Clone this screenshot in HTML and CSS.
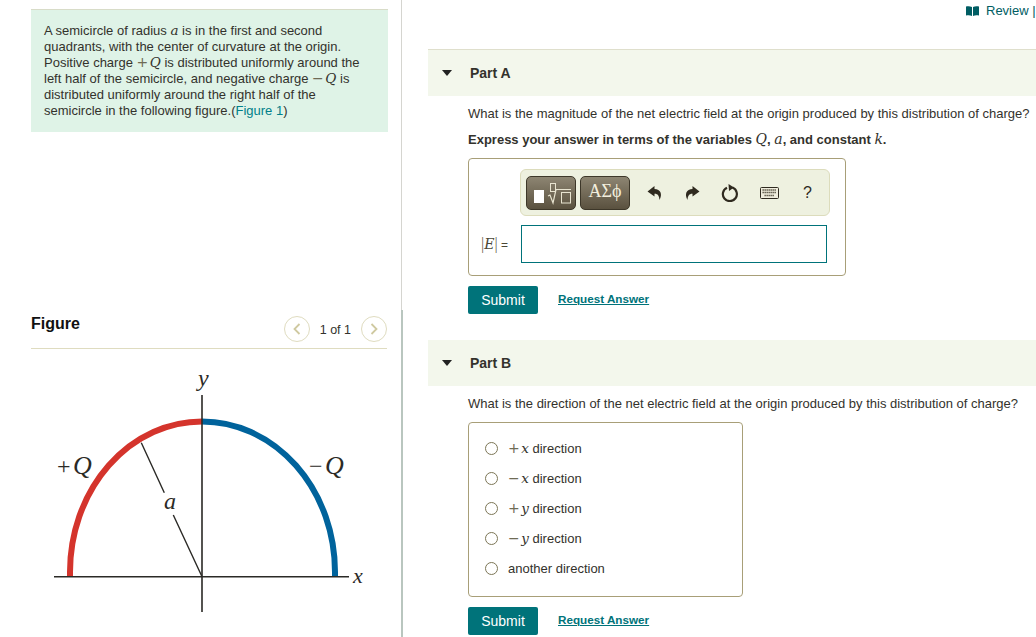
FILE: index.html
```html
<!DOCTYPE html>
<html lang="en">
<head>
  <meta charset="UTF-8">
  <meta name="viewport" content="width=device-width, initial-scale=1.0">
  <title>Part A and Part B</title>
  <link rel="stylesheet" href="styles.css">
</head>
<body>
  <div id="page">
    <!-- Left column: problem text and figure -->
    <div class="left-col">
      <div class="left-top">
        <div class="intro">
          A semicircle of radius <span class="math">a</span> is in the first and second quadrants, with the center of curvature at the origin. Positive charge <span class="math"><b>+</b>Q</span> is distributed uniformly around the left half of the semicircle, and negative charge <span class="math"><b>−</b>Q</span> is distributed uniformly around the right half of the semicircle in the following figure.(<a class="fig-link" href="#">Figure 1</a>)
        </div>
      </div>
      <div class="figure-pane">
        <div class="figure-head">
          <h2>Figure</h2>
          <div class="pager">
            <span class="page-btn">
              <svg width="10" height="12" viewBox="0 0 10 12"><path d="M7.5 1 L2.5 6 L7.5 11" fill="none" stroke="#cfc9a0" stroke-width="1.8"/></svg>
            </span>
            <span class="page-text">1 of 1</span>
            <span class="page-btn">
              <svg width="10" height="12" viewBox="0 0 10 12"><path d="M2.5 1 L7.5 6 L2.5 11" fill="none" stroke="#cfc9a0" stroke-width="1.8"/></svg>
            </span>
          </div>
        </div>
        <svg class="diagram" width="370" height="270" viewBox="0 349 370 270">
          <path d="M70 577 V572 A132 150.5 0 0 1 202 421.5" fill="none" stroke="#d4342c" stroke-width="6"/>
          <path d="M202 421.5 A133 150.5 0 0 1 335 572 V577" fill="none" stroke="#00639c" stroke-width="6"/>
          <path d="M54 576.7 H349 M202 395 V612" stroke="#2b2a26" stroke-width="1.6" fill="none"/>
          <path d="M141.3 442.7 L164.3 492.7 M173.3 515 L201.7 576" stroke="#2b2a26" stroke-width="1.4" fill="none"/>
          <text class="fig-label" x="198" y="386">y</text>
          <text class="fig-sym" x="57" y="474">+</text>
          <text class="fig-label fig-q" x="73" y="474">Q</text>
          <text class="fig-sym" x="309" y="474">−</text>
          <text class="fig-label fig-q" x="325" y="474">Q</text>
          <text class="fig-label" x="164" y="509">a</text>
          <text class="fig-label fig-x" x="353" y="583">x</text>
        </svg>
      </div>
    </div>

    <!-- Right column: the two parts -->
    <div class="right-col">
      <div class="top-links">
        <svg width="13" height="10" viewBox="0 0 13 10"><path d="M0 0.5 C2 0 4 0 6 1 V10 C4 9 2 9 0 9.5 Z M13 0.5 C11 0 9 0 7 1 V10 C9 9 11 9 13 9.5 Z" fill="#005d63"/></svg>
        <a href="#">Review | Constants</a>
      </div>

      <div class="part-head">
        <span class="caret"></span>
        <span class="part-title">Part A</span>
      </div>
      <div class="part-body">
        <p class="question">What is the magnitude of the net electric field at the origin produced by this distribution of charge?</p>
        <p class="hint">Express your answer in terms of the variables <span class="math">Q</span>, <span class="math">a</span>, and constant <span class="math">k</span>.</p>

        <div class="answer-box">
          <div class="toolbar">
            <button class="tool-btn" type="button">
              <svg width="44" height="28" viewBox="0 0 44 28">
                <rect x="5" y="11" width="10" height="13" fill="#fff"/>
                <rect x="21.5" y="4.5" width="5" height="8" fill="none" stroke="#e8e4d0" stroke-width="1"/>
                <path d="M19 17 L21 16 L24 24 L27 10.5 H42" fill="none" stroke="#e8e4d0" stroke-width="1.2"/>
                <rect x="32.5" y="13.5" width="9" height="10.5" fill="none" stroke="#e8e4d0" stroke-width="1"/>
              </svg>
            </button>
            <button class="tool-btn tool-text" type="button">ΑΣϕ</button>
            <div class="tool-icons">
              <svg width="16" height="16" viewBox="0 0 16 16"><path d="M7.5 1 L0.5 6.5 L7.5 11.5 V8.7 C10.5 8.5 12.3 10.5 12.5 15 C15.8 9 13.5 4 7.5 4 Z" fill="#2f2a1f"/></svg>
              <svg width="16" height="16" viewBox="0 0 16 16"><path d="M8.5 1 L15.5 6.5 L8.5 11.5 V8.7 C5.5 8.5 3.7 10.5 3.5 15 C0.2 9 2.5 4 8.5 4 Z" fill="#2f2a1f"/></svg>
              <svg width="18" height="18" viewBox="0 0 18 18"><path d="M6 3.7 A7 7 0 1 0 11.5 3.6" fill="none" stroke="#2f2a1f" stroke-width="2.2"/><path d="M7.5 0 L13 3.6 L8 7 Z" fill="#2f2a1f"/></svg>
              <svg width="19" height="12" viewBox="0 0 19 12"><rect x="0.5" y="0.5" width="18" height="11" rx="1" fill="#efeddd" stroke="#2f2a1f"/><path d="M2.5 3 H16.5 M2.5 5.5 H16.5 M4.5 8.5 H14.5" stroke="#4a4536" stroke-width="1.3" stroke-dasharray="1.3 0.7"/></svg>
              <span class="tool-help">?</span>
            </div>
          </div>
          <div class="input-row">
            <label class="input-label"><span class="math-bar">|</span><span class="math">E</span><span class="math-bar">|</span> =</label>
            <input class="answer-input" type="text">
          </div>
        </div>

        <div class="actions">
          <button class="submit-btn" type="button">Submit</button>
          <a class="request-link" href="#">Request Answer</a>
        </div>
      </div>

      <div class="part-head part-b">
        <span class="caret"></span>
        <span class="part-title">Part B</span>
      </div>
      <div class="part-body">
        <p class="question">What is the direction of the net electric field at the origin produced by this distribution of charge?</p>

        <div class="choice-box">
          <label class="choice"><span class="radio"></span><span><span class="math"><b>+</b>x</span> direction</span></label>
          <label class="choice"><span class="radio"></span><span><span class="math"><b>−</b>x</span> direction</span></label>
          <label class="choice"><span class="radio"></span><span><span class="math"><b>+</b>y</span> direction</span></label>
          <label class="choice"><span class="radio"></span><span><span class="math"><b>−</b>y</span> direction</span></label>
          <label class="choice"><span class="radio"></span><span>another direction</span></label>
        </div>

        <div class="actions">
          <button class="submit-btn" type="button">Submit</button>
          <a class="request-link" href="#">Request Answer</a>
        </div>
      </div>
    </div>
  </div>
</body>
</html>
```

FILE: styles.css
```css
/* Global */
html, body {
  margin: 0;
  padding: 0;
  height: 100%;
  overflow: hidden;
  background: #fff;
}
body {
  font-family: "Liberation Sans", Arial, sans-serif;
  font-size: 13px;
  color: #33322c;
}
#page {
  display: flex;
  height: 637px;
  width: 1036px;
  overflow: hidden;
}
a {
  color: #00737a;
  text-decoration: none;
}
.math {
  font-family: "DejaVu Serif", serif;
  font-style: italic;
  font-size: 13.5px;
  line-height: 1;
}
.math b {
  font-family: "DejaVu Sans", sans-serif;
  font-style: normal;
  font-weight: normal;
  font-size: 14px;
  color: #6f6b55;
  margin-right: 1.5px;
}

/* Left column */
.left-col {
  width: 403px;
  flex: none;
  display: flex;
  flex-direction: column;
}
.left-top {
  width: 402px;
  height: 310px;
  box-sizing: border-box;
  padding: 9px 13px 0 31px;
  border-right: 1px solid #d5d5d0;
}
.intro {
  background: #dff3e7;
  border-top: 1px solid #d8dcc8;
  padding: 13px 22px 13px 13px;
  line-height: 16px;
  height: 96px;
}
.fig-link {
  color: #00808a;
}
.figure-pane {
  flex: 1;
  padding: 0 14px 0 31px;
  border-right: 2px solid #b9c6bf;
}
.figure-head {
  display: flex;
  justify-content: space-between;
  align-items: center;
  height: 38px;
  border-bottom: 1px solid #dfdcc0;
}
.figure-head h2 {
  margin: 0 0 10px;
  font-size: 16px;
  font-weight: bold;
  color: #111;
}
.pager {
  display: flex;
  align-items: center;
  gap: 10px;
}
.page-btn {
  width: 24px;
  height: 24px;
  border: 1px solid #dfdcc0;
  border-radius: 50%;
  display: flex;
  align-items: center;
  justify-content: center;
}
.page-text {
  font-size: 12.5px;
  margin-top: 2px;
}
.diagram {
  display: block;
  margin-left: -31px;
}
.fig-label {
  font-family: "Liberation Serif", serif;
  font-style: italic;
  font-size: 24px;
  fill: #2b2a26;
}
.fig-q {
  font-size: 26px;
}
.fig-x {
  font-size: 22px;
}
.fig-sym {
  font-family: "Liberation Serif", serif;
  font-size: 24px;
  fill: #2b2a26;
}

/* Right column */
.right-col {
  flex: 1;
  min-width: 0;
  margin-left: 25px;
  overflow: hidden;
}
.top-links {
  height: 49px;
  box-sizing: border-box;
  padding: 3px 0 0 538px;
  display: flex;
  align-items: flex-start;
  gap: 7px;
  white-space: nowrap;
}
.top-links svg {
  margin-top: 3px;
  flex: none;
}
.top-links a {
  color: #005d63;
}
.part-head {
  height: 46px;
  background: #f3f7ec;
  border-top: 1px solid #dfdfcc;
  display: flex;
  align-items: center;
}
.part-b {
  border-top: none;
}
.caret {
  width: 0;
  height: 0;
  margin-left: 14px;
  border-left: 5.5px solid transparent;
  border-right: 5.5px solid transparent;
  border-top: 6px solid #222;
}
.part-title {
  margin-left: 18px;
  font-weight: bold;
  font-size: 14px;
}
.part-body {
  padding-left: 40px;
}
.question {
  margin: 0;
  padding-top: 10px;
  height: 26px;
  line-height: 16px;
  white-space: nowrap;
}
.hint {
  margin: 0;
  height: 26px;
  line-height: 16px;
  font-weight: bold;
  white-space: nowrap;
}
.hint .math {
  font-weight: normal;
  font-size: 14px;
}

/* Answer box */
.answer-box {
  width: 376px;
  height: 106px;
  border: 1px solid #a89f78;
  border-radius: 4px;
  padding: 10px 0 0 0;
}
.toolbar {
  display: flex;
  align-items: center;
  gap: 4px;
  width: 298px;
  height: 45px;
  margin-left: 51px;
  padding: 0 5px;
  background: #eef1e0;
  border: 1px solid #dcdcbc;
  border-radius: 6px;
}
.tool-btn {
  width: 50px;
  height: 34px;
  padding: 0;
  border: 1px solid #3d3729;
  border-radius: 5px;
  background: linear-gradient(#8d8572, #5a513f);
  display: flex;
  align-items: center;
  justify-content: center;
}
.tool-text {
  font-family: "Liberation Serif", serif;
  font-size: 18px;
  line-height: 1;
  padding-bottom: 3px;
  color: #f2eedd;
}
.tool-icons {
  display: flex;
  align-items: center;
  gap: 21px;
  margin-left: 13px;
}
.tool-help {
  margin-left: 3px;
  font-size: 16px;
  color: #2f2a1f;
}
.input-row {
  display: flex;
  align-items: center;
  margin-top: 9px;
}
.input-label {
  width: 52px;
  box-sizing: border-box;
  padding-left: 12px;
  font-size: 12px;
  color: #4a4736;
  white-space: nowrap;
}
.math-bar {
  font-family: "Liberation Serif", serif;
  font-size: 16px;
  color: #6f6b55;
}
.input-label .math {
  font-size: 14px;
}
.answer-input {
  width: 306px;
  height: 38px;
  box-sizing: border-box;
  padding: 0 6px;
  border: 1px solid #00737a;
  border-radius: 0;
  outline: none;
  background: #fff;
}

/* Submit row */
.actions {
  display: flex;
  align-items: center;
  gap: 20px;
  margin-top: 10px;
}
.submit-btn {
  width: 70px;
  height: 28px;
  padding: 0;
  border: none;
  border-radius: 2px;
  background: #00737a;
  color: #fff;
  font-family: "Liberation Sans", Arial, sans-serif;
  font-size: 14px;
}
.request-link {
  font-size: 11.7px;
  font-weight: bold;
  text-decoration: underline;
  margin-top: -3px;
}
.part-head.part-b {
  margin-top: 26px;
}

/* Choices */
.choice-box {
  width: 273px;
  height: 163px;
  padding-top: 10px;
  border: 1px solid #a89f78;
  border-radius: 4px;
}
.choice {
  display: flex;
  align-items: center;
  gap: 10px;
  height: 30px;
  padding-left: 16px;
  color: #33322c;
}
.radio {
  width: 11px;
  height: 11px;
  border: 1px solid #7c7656;
  border-radius: 50%;
  flex: none;
  background: #fff;
}
```
